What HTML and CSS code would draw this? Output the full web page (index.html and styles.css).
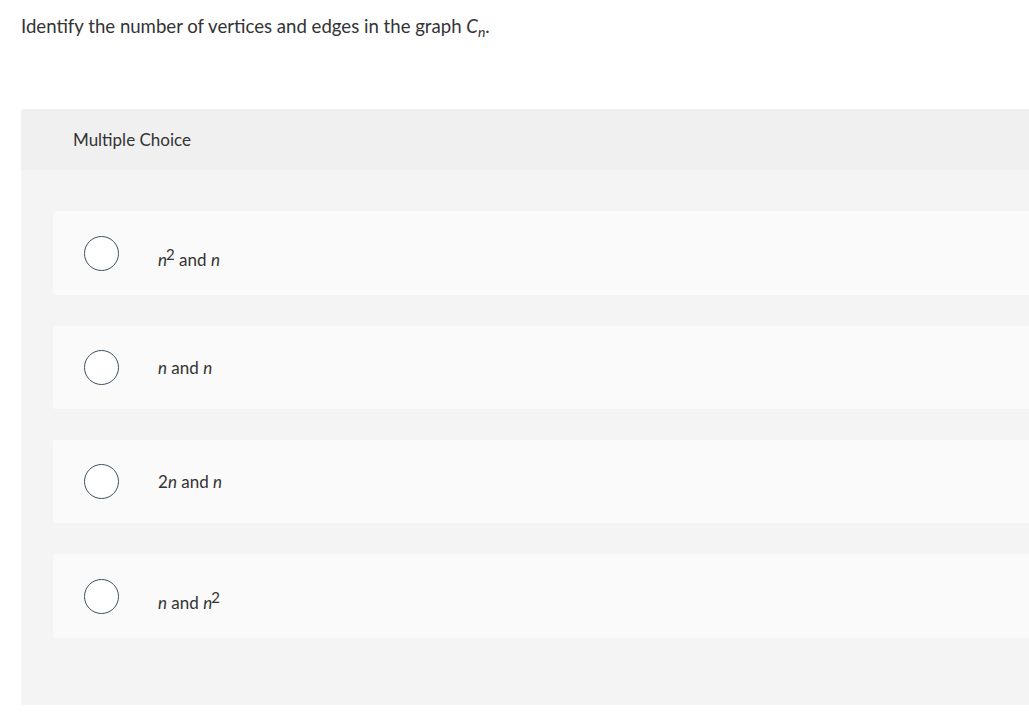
FILE: index.html
```html
<!DOCTYPE html>
<html>
<head>
<meta charset="utf-8">
<link rel="stylesheet" href="styles.css">
</head>
<body>
<p class="question">Identify the number of vertices and edges in the graph <i class="math">C<sub>n</sub></i>.</p>
<section class="panel">
  <header class="panel-head">Multiple Choice</header>
  <div class="panel-body">
    <label class="option tall"><span class="radio"></span><span class="opt-text"><i class="math">n</i><sup>2</sup> and <i class="math">n</i></span></label>
    <label class="option"><span class="radio"></span><span class="opt-text"><i class="math">n</i> and <i class="math">n</i></span></label>
    <label class="option"><span class="radio"></span><span class="opt-text">2<i class="math">n</i> and <i class="math">n</i></span></label>
    <label class="option tall"><span class="radio"></span><span class="opt-text"><i class="math">n</i> and <i class="math">n</i><sup>2</sup></span></label>
  </div>
</section>
</body>
</html>
```
FILE: styles.css
```css
html, body {
  margin: 0;
  padding: 0;
  background: #ffffff;
  overflow: hidden;
}
body {
  font-family: "Lato", "Open Sans", sans-serif;
  color: #333333;
  padding: 13px 0 0 21px;
}
.question {
  margin: 0;
  font-size: 18.6px;
  line-height: 26px;
  color: #333;
}
.math {
  font-style: italic;
}
.question sub {
  font-size: 14px;
  vertical-align: -4px;
  line-height: 0;
}
.panel {
  margin-top: 70px;
  margin-right: -40px;
  background: #f4f4f4;
  border-radius: 3px;
  padding-bottom: 67px;
}
.panel-head {
  background: #f0f0f0;
  height: 61px;
  display: flex;
  align-items: center;
  padding-left: 52px;
  font-size: 17px;
  color: #333;
  border-radius: 3px 3px 0 0;
}
.panel-body {
  padding: 41px 0 0 32px;
  display: flex;
  flex-direction: column;
  gap: 31px;
}
.option {
  background: #fafafa;
  border-radius: 3px;
  display: flex;
  align-items: center;
  height: 83px;
  padding-left: 31px;
  font-size: 17px;
}
.option.tall {
  height: 84px;
}
.radio {
  width: 33px;
  height: 33px;
  border: 1px solid #3f5060;
  border-radius: 50%;
  background: #fff;
  flex: none;
}
.opt-text {
  margin-left: 39px;
  color: #333;
}
.option.tall .opt-text {
  padding-top: 13px;
}
.opt-text sup {
  font-size: 15px;
  line-height: 0;
  vertical-align: 6px;
  margin-left: -1px;
}
```
